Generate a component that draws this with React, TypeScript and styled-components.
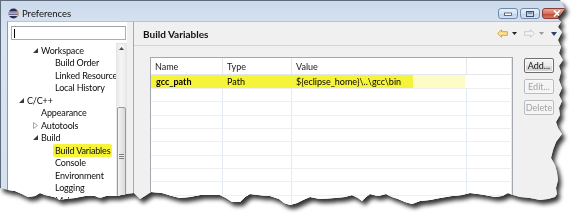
import React from "react";
import styled, { createGlobalStyle } from "styled-components";

const UI_FONT = `"Lato", "Open Sans", sans-serif`;

const GlobalStyle = createGlobalStyle`
  body {
    margin: 0;
    background: #fff;
    font-family: ${UI_FONT};
  }
`;

// torn-paper outline of the cropped window (x y in window pixels)
const tearPoints: [number, number][] = [
  [0, 0], [560, 0], [565, 8], [561, 14], [557, 17], [561, 22], [558, 27], [562, 32],
  [558, 40], [561, 47], [559, 53], [563, 60], [559, 66], [561, 72], [559, 80], [562, 88],
  [559, 95], [562, 101], [559, 108], [560, 115], [556, 122], [558, 128], [562, 134],
  [556, 142], [553, 150], [551, 158], [555, 165], [557, 172], [558, 180], [556, 188],
  [557, 194], [555, 197], [548, 199], [540, 200], [530, 198], [520, 197], [513, 195],
  [508, 193], [502, 196], [495, 197], [485, 195], [478, 194], [470, 193], [462, 195],
  [452, 196], [440, 198], [430, 200], [420, 201], [412, 204], [405, 202], [398, 199],
  [392, 197], [386, 194], [378, 196], [370, 194], [366, 197], [362, 201], [358, 198],
  [352, 195], [345, 197], [335, 198], [320, 199], [310, 197], [303, 200], [297, 203],
  [290, 205], [284, 203], [279, 199], [270, 196], [258, 195], [250, 194], [245, 197],
  [240, 202], [232, 202], [226, 198], [220, 195], [210, 195], [200, 195], [190, 197],
  [180, 198], [172, 196], [162, 193], [151, 192], [145, 196], [140, 199], [134, 193],
  [126, 194], [116, 196], [106, 196], [100, 198], [95, 196], [85, 196], [75, 198],
  [65, 199], [60, 200], [54, 197], [45, 195], [40, 193], [35, 196], [28, 197], [22, 194],
  [15, 191], [8, 190], [0, 188],
];
const tearPolygon = tearPoints.map(([x, y]) => `${x}px ${y}px`).join(", ");

const Page = styled.div`
  width: 582px;
  height: 222px;
  overflow: hidden;
  background: #fff;
`;

const Shadow = styled.div`
  width: 572px;
  height: 210px;
  filter: drop-shadow(3px 4px 2px rgba(0, 0, 0, 0.8));
`;

const Window = styled.div`
  width: 572px;
  height: 210px;
  box-sizing: border-box;
  border-top: 1px solid #5f6b7a;
  border-left: 1px solid #5f6b7a;
  background: linear-gradient(#cbdaec, #d8e4f1 30px, #d5e1ef);
  clip-path: polygon(${tearPolygon});
  display: flex;
  flex-direction: column;
  overflow: hidden;
`;

const TitleBar = styled.div`
  height: 20px;
  flex: none;
  display: flex;
  align-items: flex-start;
  padding-left: 7px;
`;

const TitleIcon = styled.svg`
  width: 11px;
  height: 11px;
  margin-top: 7px;
`;

const TitleText = styled.span`
  margin: 6px 0 0 3px;
  font-size: 9.5px;
  line-height: 13px;
  color: #111;
`;

const CaptionButtons = styled.div`
  margin-left: auto;
  margin-top: 7px;
  display: flex;
  gap: 2px;
`;

const CaptionButton = styled.div<{ $close?: boolean }>`
  width: ${p => (p.$close ? "30px" : "20px")};
  height: 11px;
  box-sizing: border-box;
  border: 1px solid ${p => (p.$close ? "#8c3a33" : "#7089ab")};
  border-radius: 3px;
  background: ${p =>
    p.$close
      ? "linear-gradient(#e8a99b, #d4705f 50%, #c2432f 51%, #d27a62)"
      : "linear-gradient(#e9f0f9, #d7e3f2 50%, #c2d2e7 51%, #d2e0f0)"};
  display: flex;
  align-items: center;
  justify-content: center;
`;

const Body = styled.div`
  flex: 1;
  display: flex;
  padding-left: 6px;
  min-height: 0;
`;

const Content = styled.div`
  flex: 1;
  display: flex;
  border-left: 1px solid #8f9bab;
  border-top: 1px solid #b7c4d4;
  background: #f0f0f0;
  min-height: 0;
`;

const LeftPanel = styled.div`
  width: 119px;
  flex: none;
  background: #fff;
  padding-top: 4px;
  margin-right: 6px;
  display: flex;
  flex-direction: column;
`;

const SearchBox = styled.div`
  width: 115px;
  height: 14px;
  box-sizing: border-box;
  margin-left: 3px;
  border: 1px solid #abadb3;
  border-top-color: #9da2a9;
  display: flex;
  align-items: center;
  padding-left: 2px;
`;

const Caret = styled.div`
  width: 1px;
  height: 9px;
  background: #000;
`;

const TreeArea = styled.div`
  flex: 1;
  display: flex;
  margin-top: 3px;
  min-height: 0;
`;

const TreeList = styled.div`
  flex: 1;
  overflow: hidden;
  padding-top: 1px;
`;

const TreeRow = styled.div<{ $level: number }>`
  height: 12.5px;
  display: flex;
  align-items: center;
  padding-left: ${p => 11 + p.$level * 14}px;
  white-space: nowrap;
  font-size: 9px;
  letter-spacing: -0.15px;
  color: #0c0c0c;
`;

const Toggle = styled.span`
  width: 8px;
  flex: none;
  display: flex;
  align-items: center;
`;

const TreeLabel = styled.span<{ $marked?: boolean }>`
  padding: 1px 2px;
  margin-left: -2px;
  border-radius: 2px;
  background: ${p => (p.$marked ? "#f6f43a" : "transparent")};
`;

const Scrollbar = styled.div`
  width: 11px;
  flex: none;
  display: flex;
  flex-direction: column;
  border-top: 1px solid #e2e2e2;
  background: linear-gradient(to right, #e5e5e5, #f4f4f4 40%, #f1f1f1 70%, #e3e3e3);
`;

const ScrollArrow = styled.div`
  height: 12px;
  display: flex;
  align-items: center;
  justify-content: center;
`;

const ScrollThumb = styled.div<{ $offset: number }>`
  margin: ${p => p.$offset}px 1px 0 1px;
  height: 120px;
  border: 1px solid #9b9b9b;
  border-radius: 2px;
  background: linear-gradient(to right, #f4f4f4, #e6e6e6 50%, #d9d9d9);
  display: flex;
  justify-content: center;
  padding-top: 46px;
  box-sizing: border-box;
`;

const Grip = styled.div`
  width: 5px;
  height: 5px;
  background: repeating-linear-gradient(#7e7e7e 0 1px, #f0f0f0 1px 2px);
`;

const RightPanel = styled.div`
  flex: 1;
  border-left: 1px solid #a7a7a7;
  display: flex;
  flex-direction: column;
  min-width: 0;
`;

const PageHeader = styled.div`
  height: 24px;
  flex: none;
  display: flex;
  align-items: center;
  padding: 0 15px 0 9px;
  border-bottom: 1px solid #d5d5d5;
  box-sizing: border-box;
`;

const PageTitle = styled.h1`
  margin: 0;
  font-size: 10px;
  font-weight: 700;
  color: #111;
`;

const NavTools = styled.div`
  margin-left: auto;
  display: flex;
  align-items: center;
`;

const NavIcon = styled.svg<{ $gap: number }>`
  margin-left: ${p => p.$gap}px;
  display: block;
`;

const PageBody = styled.div`
  flex: 1;
  display: flex;
  padding: 11px 0 0 16px;
  gap: 11px;
  min-height: 0;
`;

const Table = styled.div`
  width: 363px;
  flex: none;
  box-sizing: border-box;
  border: 1px solid #a3a8ae;
  background: #fff;
  overflow: hidden;
  font-size: 9px;
  color: #000;
`;

const TableRow = styled.div<{ $header?: boolean; $height: number; $mark?: boolean }>`
  display: flex;
  height: ${p => p.$height}px;
  box-sizing: border-box;
  border-bottom: 1px solid ${p => (p.$header ? "#e2e5e9" : "#efefef")};
  background: ${p =>
    p.$mark
      ? "linear-gradient(to right, #f6f43a 0 262px, #fdfcc6 262px 314px, transparent 314px)"
      : "transparent"};
`;

const Cell = styled.div<{ $width?: number; $header?: boolean; $mark?: boolean; $bold?: boolean }>`
  width: ${p => (p.$width ? `${p.$width}px` : "auto")};
  flex: ${p => (p.$width ? "none" : "1")};
  box-sizing: border-box;
  border-right: 1px solid
    ${p => (p.$mark ? "transparent" : p.$header ? "#e4e6e9" : "#e3eaf2")};
  padding-left: ${p => (p.$bold ? 5 : 4)}px;
  display: flex;
  align-items: center;
  white-space: nowrap;
  overflow: hidden;
  font-weight: ${p => (p.$bold ? 700 : 400)};
  color: ${p => (p.$header ? "#1a1a1a" : "#000")};
`;

const ButtonColumn = styled.div`
  display: flex;
  flex-direction: column;
  gap: 6px;
  padding-top: 1px;
`;

const ActionButton = styled.button<{ $disabled?: boolean }>`
  width: 30px;
  height: 15px;
  padding: 0;
  box-sizing: border-box;
  font-family: ${UI_FONT};
  font-size: 9px;
  border: 1px solid ${p => (p.$disabled ? "#b8bcc0" : "#6f6f6f")};
  border-radius: 2px;
  color: ${p => (p.$disabled ? "#a3a3a3" : "#111")};
  background: ${p =>
    p.$disabled
      ? "#f4f4f4"
      : "linear-gradient(#f4f4f4, #ebebeb 50%, #dedede 51%, #d2d2d2)"};
  box-shadow: inset 0 0 0 1px ${p => (p.$disabled ? "#f8f8f8" : "#fafafa")};
`;

type TreeItem = { label: string; level: number; toggle?: "open" | "closed"; marked?: boolean };

const treeItems: TreeItem[] = [
  { label: "Workspace", level: 1, toggle: "open" },
  { label: "Build Order", level: 2 },
  { label: "Linked Resource", level: 2 },
  { label: "Local History", level: 2 },
  { label: "C/C++", level: 0, toggle: "open" },
  { label: "Appearance", level: 1 },
  { label: "Autotools", level: 1, toggle: "closed" },
  { label: "Build", level: 1, toggle: "open" },
  { label: "Build Variables", level: 2, marked: true },
  { label: "Console", level: 2 },
  { label: "Environment", level: 2 },
  { label: "Logging", level: 2 },
  { label: "Make Targets", level: 2 },
];

const columns = [72, 69, 175];

const ToggleGlyph = ({ kind }: { kind: "open" | "closed" }) =>
  kind === "open" ? (
    <svg width="5" height="5" viewBox="0 0 5 5">
      <polygon points="5,0 5,5 0,5" fill="#3a3a3a" />
    </svg>
  ) : (
    <svg width="5" height="7" viewBox="0 0 5 7">
      <polygon points="0.5,0.5 4.5,3.5 0.5,6.5" fill="none" stroke="#a6a6a6" strokeWidth="1" />
    </svg>
  );

const EclipseIcon = () => (
  <TitleIcon viewBox="0 0 11 11">
    <circle cx="5.5" cy="5.5" r="5" fill="#2c2a5e" />
    <rect x="0.5" y="3.6" width="10" height="0.9" fill="#fff" />
    <rect x="0.5" y="5.4" width="10" height="0.9" fill="#fff" />
    <rect x="1" y="7.2" width="9" height="0.8" fill="#fff" />
    <path d="M7.5 1 A5 5 0 0 1 7.5 10" fill="none" stroke="#f7941e" strokeWidth="0.8" />
  </TitleIcon>
);

export default function App() {
  return (
    <Page>
      <GlobalStyle />
      <Shadow>
        <Window>
          <TitleBar>
            <EclipseIcon />
            <TitleText>Preferences</TitleText>
            <CaptionButtons>
              <CaptionButton>
                <svg width="8" height="4" viewBox="0 0 8 4">
                  <rect x="0.5" y="1" width="7" height="2.5" fill="#fff" stroke="#3d4f6b" strokeWidth="0.8" />
                </svg>
              </CaptionButton>
              <CaptionButton>
                <svg width="8" height="6" viewBox="0 0 8 6">
                  <rect x="0.5" y="0.5" width="7" height="5" fill="none" stroke="#3d4f6b" strokeWidth="1" />
                  <rect x="1.5" y="1.5" width="5" height="1" fill="#3d4f6b" />
                </svg>
              </CaptionButton>
              <CaptionButton $close>
                <svg width="8" height="7" viewBox="0 0 8 7">
                  <path d="M1 0.5 L7 6.5 M7 0.5 L1 6.5" stroke="#fff" strokeWidth="1.6" />
                </svg>
              </CaptionButton>
            </CaptionButtons>
          </TitleBar>

          <Body>
            <Content>
              <LeftPanel>
                <SearchBox>
                  <Caret />
                </SearchBox>
                <TreeArea>
                  <TreeList>
                    {treeItems.map(item => (
                      <TreeRow key={item.label} $level={item.level}>
                        <Toggle>{item.toggle && <ToggleGlyph kind={item.toggle} />}</Toggle>
                        <TreeLabel $marked={item.marked}>{item.label}</TreeLabel>
                      </TreeRow>
                    ))}
                  </TreeList>
                  <Scrollbar>
                    <ScrollArrow>
                      <svg width="5" height="3" viewBox="0 0 5 3">
                        <polygon points="2.5,0 5,3 0,3" fill="#4a4a4a" />
                      </svg>
                    </ScrollArrow>
                    <ScrollThumb $offset={54}>
                      <Grip />
                    </ScrollThumb>
                  </Scrollbar>
                </TreeArea>
              </LeftPanel>

              <RightPanel>
                <PageHeader>
                  <PageTitle>Build Variables</PageTitle>
                  <NavTools>
                    <NavIcon $gap={0} width="11" height="9" viewBox="0 0 11 9">
                      <path d="M0.7 4.5 L4.5 0.7 V2.7 H10.3 V6.3 H4.5 V8.3 Z" fill="#fbe49a" stroke="#d49a2a" strokeWidth="0.9" />
                    </NavIcon>
                    <NavIcon $gap={4} width="5" height="3" viewBox="0 0 5 3">
                      <polygon points="0,0 5,0 2.5,3" fill="#222" />
                    </NavIcon>
                    <NavIcon $gap={7} width="11" height="9" viewBox="0 0 11 9">
                      <path d="M10.3 4.5 L6.5 0.7 V2.7 H0.7 V6.3 H6.5 V8.3 Z" fill="#f3f4f6" stroke="#c3c8cf" strokeWidth="0.9" />
                    </NavIcon>
                    <NavIcon $gap={4} width="5" height="3" viewBox="0 0 5 3">
                      <polygon points="0,0 5,0 2.5,3" fill="#9a9a9a" />
                    </NavIcon>
                    <NavIcon $gap={7} width="6" height="4" viewBox="0 0 6 4">
                      <polygon points="0,0 6,0 3,4" fill="#2d3f68" />
                    </NavIcon>
                  </NavTools>
                </PageHeader>

                <PageBody>
                  <Table>
                    <TableRow $header $height={17}>
                      <Cell $header $width={columns[0]}>Name</Cell>
                      <Cell $header $width={columns[1]}>Type</Cell>
                      <Cell $header $width={columns[2]}>Value</Cell>
                      <Cell $header />
                    </TableRow>
                    <TableRow $height={14} $mark>
                      <Cell $width={columns[0]} $mark $bold>gcc_path</Cell>
                      <Cell $width={columns[1]} $mark>Path</Cell>
                      <Cell $width={columns[2]} $mark>{"${eclipse_home}\\..\\gcc\\bin"}</Cell>
                      <Cell />
                    </TableRow>
                    {Array.from({ length: 9 }).map((_, i) => (
                      <TableRow key={i} $height={13.33}>
                        <Cell $width={columns[0]} />
                        <Cell $width={columns[1]} />
                        <Cell $width={columns[2]} />
                        <Cell />
                      </TableRow>
                    ))}
                  </Table>
                  <ButtonColumn>
                    <ActionButton>Add...</ActionButton>
                    <ActionButton $disabled>Edit...</ActionButton>
                    <ActionButton $disabled>Delete</ActionButton>
                  </ButtonColumn>
                </PageBody>
              </RightPanel>
            </Content>
          </Body>
        </Window>
      </Shadow>
    </Page>
  );
}
